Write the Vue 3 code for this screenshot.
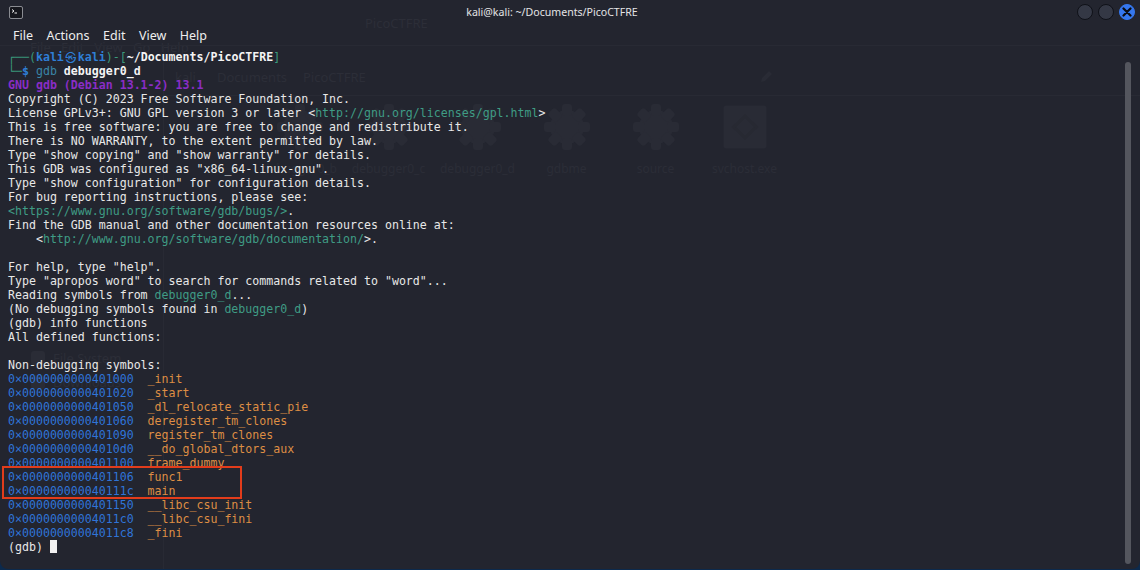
<script setup>
const W = 'w', U = 'u', P = 'p', A = 'a', F = 'f', B = 'b', G = 'g', C = 'c'
const lines = [
  [[G, '┌──('], [B, 'kali'], [B, '㉿', 'mark'], [B, 'kali'], [G, ')-['], [W + ' bold', '~/Documents/PicoCTFRE'], [G, ']']],
  [[G, '└─'], [B, '$'], [W, ' '], [C, 'gdb'], [W + ' bold', ' debugger0_d']],
  [[P, 'GNU gdb (Debian 13.1-2) 13.1']],
  [[W, 'Copyright (C) 2023 Free Software Foundation, Inc.']],
  [[W, 'License GPLv3+: GNU GPL version 3 or later <'], [U, 'http://gnu.org/licenses/gpl.html'], [W, '>']],
  [[W, 'This is free software: you are free to change and redistribute it.']],
  [[W, 'There is NO WARRANTY, to the extent permitted by law.']],
  [[W, 'Type "show copying" and "show warranty" for details.']],
  [[W, 'This GDB was configured as "x86_64-linux-gnu".']],
  [[W, 'Type "show configuration" for configuration details.']],
  [[W, 'For bug reporting instructions, please see:']],
  [[U, '<https://www.gnu.org/software/gdb/bugs/>'], [W, '.']],
  [[W, 'Find the GDB manual and other documentation resources online at:']],
  [[W, '    <'], [U, 'http://www.gnu.org/software/gdb/documentation/'], [W, '>.']],
  [],
  [[W, 'For help, type "help".']],
  [[W, 'Type "apropos word" to search for commands related to "word"...']],
  [[W, 'Reading symbols from '], [U, 'debugger0_d'], [W, '...']],
  [[W, '(No debugging symbols found in '], [U, 'debugger0_d'], [W, ')']],
  [[W, '(gdb) info functions']],
  [[W, 'All defined functions:']],
  [],
  [[W, 'Non-debugging symbols:']],
  ...[
    ['401000', '_init'], ['401020', '_start'], ['401050', '_dl_relocate_static_pie'],
    ['401060', 'deregister_tm_clones'], ['401090', 'register_tm_clones'],
    ['4010d0', '__do_global_dtors_aux'], ['401100', 'frame_dummy'], ['401106', 'func1'],
    ['40111c', 'main'], ['401150', '__libc_csu_init'], ['4011c0', '__libc_csu_fini'], ['4011c8', '_fini']
  ].map(([a, f]) => [[A, '0×0000000000' + a], [W, '  '], [F, f]])
]
const menu = ['File', 'Actions', 'Edit', 'View', 'Help']
const files = ['debugger0_b', 'debugger0_c', 'debugger0_d', 'gdbme', 'source']
const teeth = [0, 45, 90, 135, 180, 225, 270, 315]
</script>

<template>
  <div class="window">
    <div class="ghost" aria-hidden="true">
      <span class="gt" style="left: 365px; top: 15px">PicoCTFRE</span>
      <span class="gt" style="left: 30px; top: 39px">File&nbsp;&nbsp; Edit&nbsp;&nbsp; View&nbsp;&nbsp; Go&nbsp;&nbsp; Help</span>
      <span class="gt" style="left: 175px; top: 69px">kali</span>
      <span class="gt" style="left: 217px; top: 69px">Documents</span>
      <span class="gt" style="left: 303px; top: 69px">PicoCTFRE</span>
      <span class="gt" style="left: 53px; top: 350px">File System</span>
      <span class="gt" style="left: 53px; top: 374px">Downloads</span>
      <span class="gicon" style="left: 31px; top: 351px"></span>
      <span class="gicon" style="left: 31px; top: 375px"></span>
      <span class="hline" style="left: 0; top: 45px; width: 1140px"></span>
      <span class="hline" style="left: 163px; top: 95px; width: 977px"></span>
      <span class="vline"></span>
      <svg class="pencil" width="14" height="14" viewBox="0 0 14 14">
        <path d="M1 13l1-4 7-7 3 3-7 7z" fill="#292b35" />
      </svg>
      <div class="icons">
        <div v-for="f in files" :key="f" class="item">
          <svg width="46" height="46" viewBox="0 0 46 46">
            <circle cx="23" cy="23" r="17" />
            <rect v-for="t in teeth" :key="t" x="18" y="0" width="10" height="12" rx="3" :transform="`rotate(${t} 23 23)`" />
          </svg>
          <span class="gt2">{{ f }}</span>
        </div>
        <div class="item">
          <svg width="46" height="46" viewBox="0 0 46 46">
            <rect x="1.5" y="1.5" width="43" height="43" rx="3" />
            <path d="M23 12l11 11-11 11-11-11z" fill="none" stroke="#272932" stroke-width="3" />
          </svg>
          <span class="gt2">svchost.exe</span>
        </div>
      </div>
    </div>

    <header class="titlebar">
      <span class="appicon">
        <svg width="14" height="13" viewBox="0 0 14 13">
          <rect x="0.5" y="0.5" width="13" height="12" rx="1.5" fill="#16171d" stroke="#8a8c92" />
          <path d="M3 3.5l2 1.5-2 1.5M5.5 7H8" fill="none" stroke="#f0f0f0" stroke-width="1" />
        </svg>
      </span>
      <span class="title">kali@kali: ~/Documents/PicoCTFRE</span>
      <span class="controls">
        <span class="dot"></span>
        <span class="dot"></span>
        <span class="dot close">
          <svg width="10" height="10" viewBox="0 0 10 10">
            <path d="M1.5 1.5l7 7M8.5 1.5l-7 7" stroke="#0a0c12" stroke-width="2.2" stroke-linecap="round" />
          </svg>
        </span>
      </span>
    </header>

    <nav class="menubar">
      <span v-for="m in menu" :key="m">{{ m }}</span>
    </nav>

    <div class="body">
      <main class="term">
        <div v-for="(line, i) in lines" :key="i" class="line">
          <span v-for="(seg, j) in line" :key="j" :class="[seg[0], seg[2]]">{{ seg[1] }}</span>
        </div>
        <div class="line"><span class="w">(gdb) </span><span class="cursor"></span></div>
        <div class="highlight"></div>
      </main>
      <div class="scrollbar"></div>
    </div>
  </div>
</template>

<style>
html, body { background: #0c2a4d; }
</style>

<style scoped>
.window {
  position: relative;
  width: 1140px;
  height: 569px;
  background: #23252f;
  border-radius: 0 0 8px 8px;
  overflow: hidden;
  display: flex;
  flex-direction: column;
}
.ghost { position: absolute; inset: 0; }
.gt { position: absolute; font: 13px/16px "Noto Sans", sans-serif; color: #2c2e38; white-space: nowrap; }
.gt2 { font: 12px/16px "Noto Sans", sans-serif; color: #2b2d37; white-space: nowrap; }
.gicon { position: absolute; width: 14px; height: 14px; border-radius: 3px; background: #2a2c36; }
.hline { position: absolute; height: 1px; background: #282a34; }
.vline { position: absolute; left: 163px; top: 45px; bottom: 0; width: 1px; background: #282a34; }
.pencil { position: absolute; left: 760px; top: 69px; }
.icons { position: absolute; left: 255px; top: 104px; display: flex; }
.item { width: 89px; display: flex; flex-direction: column; align-items: center; gap: 11px; }
.item svg { fill: #292b35; }

.titlebar {
  position: relative;
  flex: none;
  height: 24px;
  display: flex;
  align-items: center;
  padding: 0 5px 0 9px;
}
.appicon { display: flex; width: 14px; }
.title {
  flex: 1;
  padding-left: 4px;
  text-align: center;
  font: 10.6px/24px "Noto Sans", sans-serif;
  color: #e4e4e6;
}
.controls { display: flex; gap: 5px; }
.dot {
  width: 16px;
  height: 16px;
  box-sizing: border-box;
  border-radius: 50%;
  background: #343845;
  border: 1px solid #0f1118;
  display: flex;
  align-items: center;
  justify-content: center;
}
.close { background: #3577ee; border-color: #3577ee; }

.menubar {
  position: relative;
  flex: none;
  height: 22px;
  display: flex;
  align-items: center;
  gap: 13.5px;
  padding: 2px 0 0 13px;
  box-sizing: border-box;
  font: 12.5px/20px "Noto Sans", sans-serif;
  color: #eeeeee;
}

.body { position: relative; flex: 1; min-height: 0; display: flex; }
.term {
  position: relative;
  flex: 1;
  padding: 4px 0 0 8px;
  font: 11.6px/14px "DejaVu Sans Mono", monospace;
  color: #e8e8e8;
}
.line { height: 14px; white-space: pre; }
.w { color: #e8e8e8; }
.bold { font-weight: 700; color: #f4f4f4; }
.g { color: #3a9c7c; }
.b { color: #2f7fd6; font-weight: 700; }
.c { color: #3a86a8; }
.p { color: #8a2dc6; font-weight: 700; }
.u { color: #3f9c85; }
.a { color: #2f74d8; }
.f { color: #de8e44; }
.mark { display: inline-block; width: 13.97px; text-align: center; font-family: "Noto Sans CJK JP", sans-serif; font-weight: 400; font-size: 11px; line-height: 14px; vertical-align: top; }
.cursor { display: inline-block; width: 7px; height: 13px; background: #f2f2f2; vertical-align: top; }
.highlight {
  position: absolute;
  left: 2px;
  top: 420px;
  width: 236px;
  height: 29px;
  border: 2px solid #e23c1b;
}
.scrollbar {
  flex: none;
  width: 6px;
  margin: 16px 9px 5px 0;
  border-radius: 3px;
  background: #54565e;
}
</style>
